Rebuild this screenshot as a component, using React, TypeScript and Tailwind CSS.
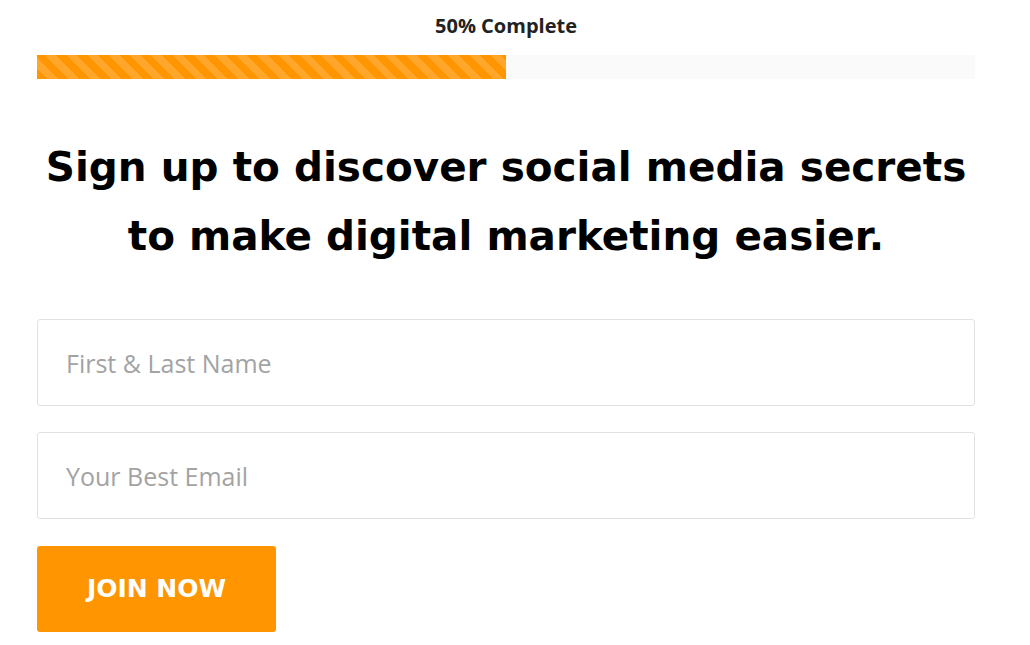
export default function App() {
  const pct = 50;
  return (
    <div className="min-h-[645px] bg-white px-[37px] pt-[13px] pb-4">
      <div className="w-[938px]">
        <p className="text-center font-['Open_Sans',sans-serif] text-[20px] font-bold leading-[26px] text-[#222]">
          {pct}% Complete
        </p>
        <div className="mt-[16px] h-6 w-full bg-[#fafafa]">
          <div
            className="h-full bg-[#ff9500] bg-[repeating-linear-gradient(45deg,#ff9500_0px,#ff9500_7.5px,#ffa62b_7.5px,#ffa62b_15px)]"
            style={{ width: `${pct}%` }}
          />
        </div>

        <h1 className="mt-[54px] text-center font-['DejaVu_Sans',sans-serif] text-[40.5px] font-bold leading-[69px] text-black">
          Sign up to discover social media secrets
          <br />
          to make digital marketing easier.
        </h1>

        <form className="mt-[48px] flex flex-col" onSubmit={(e) => e.preventDefault()}>
          <input
            type="text"
            placeholder="First & Last Name"
            className="h-[87px] w-full rounded-[3px] border border-[#e2e2e2] bg-white px-[28px] font-['Open_Sans',sans-serif] text-[25px] text-[#444] outline-none placeholder:text-[#a3a3a3]"
          />
          <input
            type="email"
            placeholder="Your Best Email"
            className="mt-[26px] h-[87px] w-full rounded-[3px] border border-[#e2e2e2] bg-white px-[28px] font-['Open_Sans',sans-serif] text-[25px] text-[#444] outline-none placeholder:text-[#a3a3a3]"
          />
          <button
            type="submit"
            className="mt-[27px] h-[86px] w-[239px] rounded-[3px] bg-[#ff9500] font-['DejaVu_Sans',sans-serif] text-[25px] font-bold text-white"
          >
            JOIN NOW
          </button>
        </form>
      </div>
    </div>
  );
}
